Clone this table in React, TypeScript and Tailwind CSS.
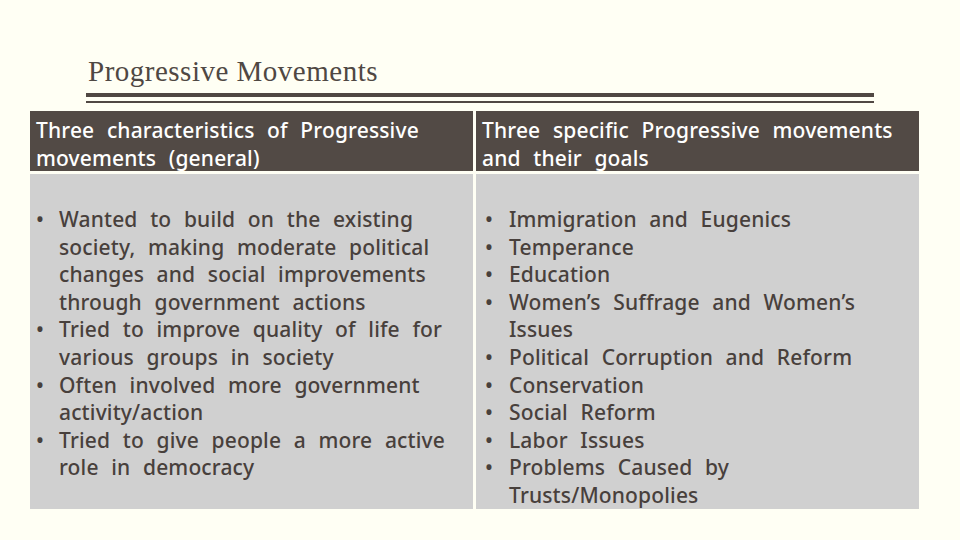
import React from "react";

const left = [
  ["Wanted to build on the existing", "society, making moderate political", "changes and social improvements", "through government actions"],
  ["Tried to improve quality of life for", "various groups in society"],
  ["Often involved more government", "activity/action"],
  ["Tried to give people a more active", "role in democracy"],
];

const right = [
  ["Immigration and Eugenics"],
  ["Temperance"],
  ["Education"],
  ["Women\u2019s Suffrage and Women\u2019s", "Issues"],
  ["Political Corruption and Reform"],
  ["Conservation"],
  ["Social Reform"],
  ["Labor Issues"],
  ["Problems Caused by", "Trusts/Monopolies"],
];

const body = "font-['Noto_Sans',sans-serif] font-medium text-[21px] leading-[27.6px] [word-spacing:7px] tracking-[0.15px] whitespace-nowrap";

export default function App() {
  return (
    <div className="w-[960px] h-[540px] bg-[#fffff4] overflow-hidden relative">
      <div className="pl-[88px] pt-[55px] h-[93px]">
        <h1 className="font-['Liberation_Serif',serif] text-[29px] leading-[33px] text-[#4f4843] tracking-[0.5px]">
          Progressive Movements
        </h1>
      </div>
      <div className="ml-[86px] w-[788px]">
        <div className="h-[4px] bg-[#504843]" />
        <div className="h-[4px]" />
        <div className="h-[2px] bg-[#504843]" />
      </div>
      <div className="ml-[30px] mt-[8px] w-[889px] grid grid-cols-[443px_3px_443px] grid-rows-[60px_3px_335px]">
        <div className={`bg-[#524a45] text-white px-[6px] pt-[6px] ${body}`}>
          Three characteristics of Progressive<br />movements (general)
        </div>
        <div className="bg-[#fffff4]" />
        <div className={`bg-[#524a45] text-white px-[6px] pt-[6px] ${body}`}>
          Three specific Progressive movements<br />and their goals
        </div>
        <div className="col-span-3 bg-[#fffff4]" />
        <div className={`bg-[#d0d0d0] text-[#48403c] pt-[32px] ${body}`}>
          {left.map((item, i) => (
            <div key={i} className="flex">
              <span className="w-[29px] pl-[6px]">•</span>
              <span>
                {item.map((l, j) => (
                  <div key={j}>{l}</div>
                ))}
              </span>
            </div>
          ))}
        </div>
        <div className="bg-[#fffff4]" />
        <div className={`bg-[#d0d0d0] text-[#48403c] pt-[32px] ${body}`}>
          {right.map((item, i) => (
            <div key={i} className="flex">
              <span className="w-[33px] pl-[9px]">•</span>
              <span>
                {item.map((l, j) => (
                  <div key={j}>{l}</div>
                ))}
              </span>
            </div>
          ))}
        </div>
      </div>
    </div>
  );
}
